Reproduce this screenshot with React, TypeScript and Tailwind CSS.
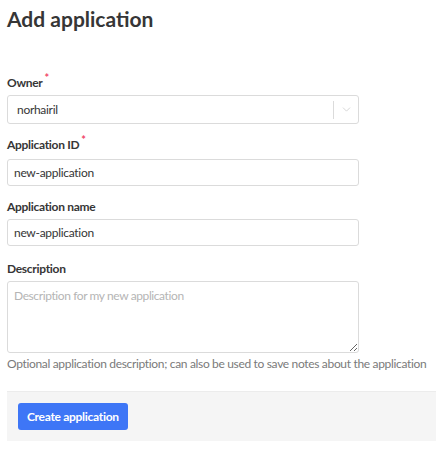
import { ChevronDown } from "lucide-react";

function Label({ text, required }: { text: string; required?: boolean }) {
  return (
    <label className="block text-[12px] font-bold leading-[18px] tracking-[-0.3px] text-[#363636]">
      {text}
      {required && <span className="relative -top-[5px] ml-[2px] text-[11px] font-bold text-[#f14668]">*</span>}
    </label>
  );
}

export default function App() {
  return (
    <div className="min-h-[452px] bg-white pl-[7px] font-['Source_Sans_Pro','Lato',sans-serif] text-[#363636]">
      <h1 className="pt-[4px] text-[21px] font-bold leading-[30px] text-[#363636]">Add application</h1>

      <div className="mt-[40px] w-[352px]">
        <Label text="Owner" required />
        <div className="mt-[3px] flex h-[29px] items-center rounded-[3px] border border-[#dbdbdb] bg-white">
          <span className="flex-1 pl-[9px] text-[12px] tracking-[-0.3px] text-[#363636]">norhairil</span>
          <span className="h-[18px] w-px bg-[#dbdbdb]" />
          <span className="flex w-[24px] justify-center text-[#cccccc]">
            <ChevronDown size={13} strokeWidth={1.5} />
          </span>
        </div>

        <div className="mt-[12px]">
          <Label text="Application ID" required />
          <input
            defaultValue="new-application"
            className="mt-[5px] block h-[27px] w-full rounded-[3px] border border-[#dbdbdb] px-[6px] text-[12px] tracking-[-0.3px] text-[#363636] outline-none"
          />
        </div>

        <div className="mt-[12px]">
          <Label text="Application name" />
          <input
            defaultValue="new-application"
            className="mt-[3px] block h-[27px] w-full rounded-[3px] border border-[#dbdbdb] px-[6px] text-[12px] tracking-[-0.3px] text-[#363636] outline-none"
          />
        </div>

        <div className="mt-[14px]">
          <Label text="Description" />
          <textarea
            placeholder="Description for my new application"
            className="mt-[3px] block h-[72px] w-full rounded-[3px] border border-[#dbdbdb] px-[6px] py-[5px] text-[12px] tracking-[-0.4px] text-[#363636] outline-none placeholder:text-[#b5b5b5]"
          />
        </div>
      </div>
      <p className="mt-[2px] whitespace-nowrap text-[12px] leading-[18px] tracking-[-0.33px] text-[#7a7a7a]">
        Optional application description; can also be used to save notes about the application
      </p>

      <div className="mt-[18px] flex h-[50px] items-center border-t border-[#ececec] bg-[#f5f5f5] pl-[11px]">
        <button className="h-[27px] rounded-[3px] bg-[#3e76f6] px-[9px] text-[12px] font-bold tracking-[-0.3px] text-white">
          Create application
        </button>
      </div>
    </div>
  );
}
